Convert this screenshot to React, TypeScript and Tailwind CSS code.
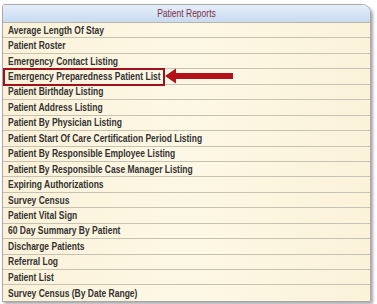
const reports = [
  "Average Length Of Stay",
  "Patient Roster",
  "Emergency Contact Listing",
  "Emergency Preparedness Patient List",
  "Patient Birthday Listing",
  "Patient Address Listing",
  "Patient By Physician Listing",
  "Patient Start Of Care Certification Period Listing",
  "Patient By Responsible Employee Listing",
  "Patient By Responsible Case Manager Listing",
  "Expiring Authorizations",
  "Survey Census",
  "Patient Vital Sign",
  "60 Day Summary By Patient",
  "Discharge Patients",
  "Referral Log",
  "Patient List",
  "Survey Census (By Date Range)",
];

// the screenshot is squeezed horizontally, so text is narrowed with scale-x
function Label({ text }: { text: string }) {
  return (
    <span className="inline-block whitespace-nowrap scale-x-[0.85] origin-left">
      {text}
    </span>
  );
}

export default function App() {
  return (
    <div
      className="w-[377px] h-[304px] bg-white pt-[4px] pl-[2px]"
      style={{ fontFamily: '"Liberation Sans", Arial, sans-serif' }}
    >
      <div className="w-[369px] rounded-tr-[9px] rounded-tl-[3px] border border-[#a9a9a9] shadow-[2px_2px_3px_rgba(0,0,0,0.35)] overflow-hidden">
        <div className="h-[18px] flex items-center justify-center bg-gradient-to-b from-[#e4eefa] to-[#c9dbf1] border-b border-[#b9b6a6] text-[10px] text-[#7f2f47]">
          <span className="inline-block whitespace-nowrap scale-x-[0.85]">Patient Reports</span>
        </div>
        <div className="bg-gradient-to-r from-[#fbf1d8] via-[#fdf8e6] to-[#fbf2d9]">
          {reports.map((r, i) => (
            <div
              key={r}
              className={
                "h-[15.45px] flex items-center border-b border-[#c7c3b3] last:border-b-0 text-[10px] font-bold text-[#333333] " +
                (i === 3 ? "relative" : "pl-[5px]")
              }
            >
              {i === 3 ? (
                <>
                  <div className="w-[162px] h-[18px] flex items-center pl-[3px] border-2 border-[#a0121b] shrink-0">
                    <Label text={r} />
                  </div>
                  <svg
                    className="absolute left-[162px] top-[-1px]"
                    width="70"
                    height="16"
                    viewBox="0 0 70 16"
                  >
                    <polygon
                      points="0,8 11,0.5 11,5 68,5 68,11 11,11 11,15.5"
                      fill="#b3101a"
                    />
                  </svg>
                </>
              ) : (
                <Label text={r} />
              )}
            </div>
          ))}
        </div>
      </div>
    </div>
  );
}
